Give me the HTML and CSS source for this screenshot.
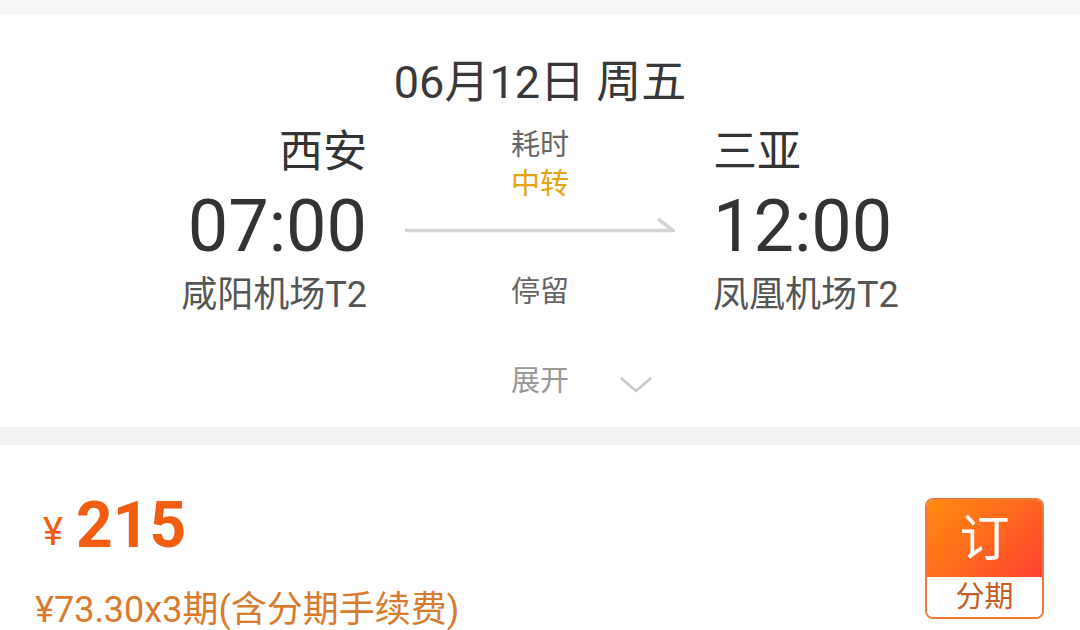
FILE: index.html
```html
<!DOCTYPE html>
<html>

<head>
  <meta charset="utf-8">
  <meta name="viewport" content="width=device-width, initial-scale=1.0">
  <link rel="stylesheet" href="styles.css">
</head>

<body>
  <div class="top-strip"></div>

  <section class="flight">
    <div class="flight-date">06月12日 周五</div>

    <div class="route">
      <div class="stop stop-from">
        <div class="city">西安</div>
        <div class="time">07:00</div>
        <div class="airport">咸阳机场T2</div>
      </div>

      <div class="transit">
        <div class="transit-label">耗时</div>
        <div class="transit-type">中转</div>
        <svg class="route-arrow" width="270" height="20" viewBox="0 0 270 20">
          <path d="M0 14.5 H268 L253 3" fill="none" stroke="#d4d4d4" stroke-width="3.5" />
        </svg>
        <div class="transit-label transit-stay">停留</div>
      </div>

      <div class="stop stop-to">
        <div class="city">三亚</div>
        <div class="time">12:00</div>
        <div class="airport">凤凰机场T2</div>
      </div>
    </div>

    <div class="expand">
      <span>展开</span>
      <svg class="chevron" width="34" height="20" viewBox="0 0 34 20">
        <polyline points="2,4 17,17 32,4" fill="none" stroke="#c9c9c9" stroke-width="2.5" />
      </svg>
    </div>
  </section>

  <div class="divider"></div>

  <section class="price-bar">
    <div class="price">
      <div class="price-main"><span class="currency">¥</span><span class="amount">215</span></div>
      <div class="installment">¥73.30x3期(含分期手续费)</div>
    </div>

    <div class="book-btn">
      <div class="book-top">订</div>
      <div class="book-bottom">分期</div>
    </div>
  </section>
</body>

</html>
```

FILE: styles.css
```css
* {
  box-sizing: border-box;
  margin: 0;
  padding: 0;
}

body {
  width: 1080px;
  height: 630px;
  overflow: hidden;
  background-color: #fff;
  font-family: Roboto, "Noto Sans CJK SC", sans-serif;
  color: #333;
}

.top-strip {
  height: 15px;
  background-color: #f6f6f6;
}

/* flight card */
.flight {
  padding: 40px 0 26px;
}

.flight-date {
  font-size: 45px;
  line-height: 56px;
  text-align: center;
  color: #383838;
}

.route {
  display: grid;
  grid-template-columns: 1fr 270px 1fr;
  column-gap: 38px;
  margin-top: 15px;
}

.stop-from {
  text-align: right;
}

.stop-to {
  text-align: left;
}

.city {
  font-size: 44px;
  line-height: 52px;
  color: #333;
}

.time {
  font-size: 72px;
  line-height: 97px;
  color: #333;
}

.airport {
  font-size: 36px;
  line-height: 40px;
  color: #555;
}

.transit {
  display: flex;
  flex-direction: column;
  align-items: center;
}

.transit-label {
  font-size: 29px;
  line-height: 38px;
  color: #666;
}

.transit-type {
  font-size: 29px;
  line-height: 40px;
  color: #e3a30c;
}

.route-arrow {
  display: block;
  margin-top: 12px;
}

.transit-stay {
  margin-top: 36px;
  line-height: 40px;
}

.expand {
  display: flex;
  justify-content: center;
  align-items: center;
  gap: 50px;
  /* keeps the label centred while the chevron sits to its right */
  padding-left: 84px;
  margin-top: 46px;
  font-size: 29px;
  line-height: 40px;
  color: #999;
}

.chevron {
  display: block;
  margin-top: 6px;
}

.divider {
  height: 18px;
  background-color: #f2f3f5;
}

/* price + booking */
.price-bar {
  display: flex;
  justify-content: space-between;
  align-items: flex-start;
  padding: 46px 36px 0 35px;
}

.price-main {
  line-height: 70px;
  color: #f25d12;
}

.currency {
  font-size: 38px;
  margin: 0 13px 0 8px;
  vertical-align: 2px;
}

.amount {
  font-size: 64px;
  font-weight: 700;
}

.installment {
  margin-top: 12px;
  font-size: 36px;
  line-height: 42px;
  color: #d87b2e;
}

.book-btn {
  width: 119px;
  height: 121px;
  margin-top: 7px;
  border: 2px solid #ee7a35;
  border-radius: 8px;
  overflow: hidden;
  display: flex;
  flex-direction: column;
}

.book-top {
  height: 77px;
  display: flex;
  align-items: center;
  justify-content: center;
  background: linear-gradient(135deg, #ff8a10 0%, #ff6a1e 50%, #ff3f33 100%);
  color: #fff;
  font-size: 50px;
  line-height: 1;
}

.book-bottom {
  flex: 1;
  display: flex;
  align-items: center;
  justify-content: center;
  background-color: #fff;
  color: #c45c24;
  font-size: 29px;
  line-height: 1;
}
```
